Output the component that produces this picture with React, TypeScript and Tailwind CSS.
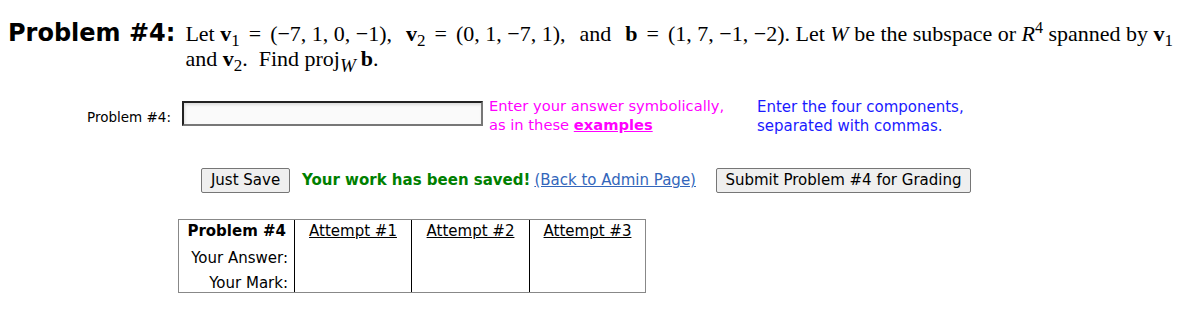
function V({ n }: { n: string }) {
  return (
    <>
      <b>v</b>
      <sub className="text-[17px] bottom-[-0.3em]">{n}</sub>
    </>
  );
}

function Eq() {
  return <span className="mx-[9px]">=</span>;
}

export default function App() {
  return (
    <div className="w-[1189px] h-[310px] bg-white text-black font-['DejaVu_Sans',Verdana,sans-serif]">
      {/* problem statement */}
      <div className="flex items-baseline pt-[18px] pl-[8px]">
        <div className="text-[24px] font-bold leading-[30px] whitespace-nowrap">Problem #4:</div>
        <div className="ml-[10px] text-[22px] leading-[25px] font-['Liberation_Serif','Times_New_Roman',serif]">
          <div className="whitespace-nowrap">
            Let <V n="1" />
            <Eq />
            (−7, 1, 0, −1),<span className="ml-[14px]" />
            <V n="2" />
            <Eq />
            (0, 1, −7, 1),<span className="ml-[14px]" />
            and<span className="ml-[14px]" />
            <b>b</b>
            <Eq />
            (1, 7, −1, −2). Let <i>W</i> be the subspace or <i>R</i>
            <sup className="text-[16px]">4</sup> spanned by <V n="1" />
          </div>
          <div className="whitespace-nowrap">
            and <V n="2" />.&nbsp; Find proj
            <sub className="text-[19px] bottom-[-0.3em] italic">W</sub>
            <b className="ml-[5px]">b</b>.
          </div>
        </div>
      </div>

      {/* answer row */}
      <div className="flex items-start mt-[30px] pl-[87px]">
        <div className="text-[13.5px] leading-[16px] mt-[8px] whitespace-nowrap">Problem #4:</div>
        <input
          type="text"
          className="ml-[11px] w-[301px] h-[25px] border-2 border-t-[#222] border-l-[#222] border-b-[#777] border-r-[#777] bg-[#fafafa] shadow-[inset_1px_2px_3px_rgba(0,0,0,0.12)] outline-none"
        />
        <div className="ml-[6px] w-[268px] text-[14.7px] leading-[19px] -mt-[5px] text-[#ff00ff] whitespace-nowrap">
          <div>Enter your answer symbolically,</div>
          <div>
            as in these <a href="#" className="font-bold underline">examples</a>
          </div>
        </div>
        <div className="text-[15px] leading-[19px] -mt-[3px] text-[#1a1aff] whitespace-nowrap">
          <div>Enter the four components,</div>
          <div>separated with commas.</div>
        </div>
      </div>

      {/* buttons */}
      <div className="flex items-center mt-[32px] pl-[201px] text-[15px] whitespace-nowrap">
        <button className="h-[25px] w-[89px] border border-[#767676] rounded-[2px] bg-[#efefef] text-[15px]">
          Just Save
        </button>
        <span className="ml-[12px] font-bold text-[#008000]">Your work has been saved!</span>
        <a href="#" className="ml-[4px] text-[#3366bb] underline">(Back to Admin Page)</a>
        <button className="ml-[20px] h-[25px] w-[255px] border border-[#767676] rounded-[2px] bg-[#efefef] text-[15px]">
          Submit Problem #4 for Grading
        </button>
      </div>

      {/* attempts table */}
      <div className="mt-[26px] ml-[178px] w-[468px] border border-[#888] text-[15px]">
        <div className="grid grid-cols-[115px_117px_118px_116px] h-[72px]">
          <div className="flex flex-col items-end pr-[6px]">
            <div className="h-[22px] leading-[22px] font-bold pr-[2px]">Problem #4</div>
            <div className="h-[32px] leading-[32px]">Your Answer:</div>
            <div className="h-[18px] leading-[18px]">Your Mark:</div>
          </div>
          <div className="border-l border-black text-center leading-[22px]">
            <a href="#" className="underline">Attempt #1</a>
          </div>
          <div className="border-l border-black text-center leading-[22px]">
            <a href="#" className="underline">Attempt #2</a>
          </div>
          <div className="border-l border-black text-center leading-[22px]">
            <a href="#" className="underline">Attempt #3</a>
          </div>
        </div>
      </div>
    </div>
  );
}
